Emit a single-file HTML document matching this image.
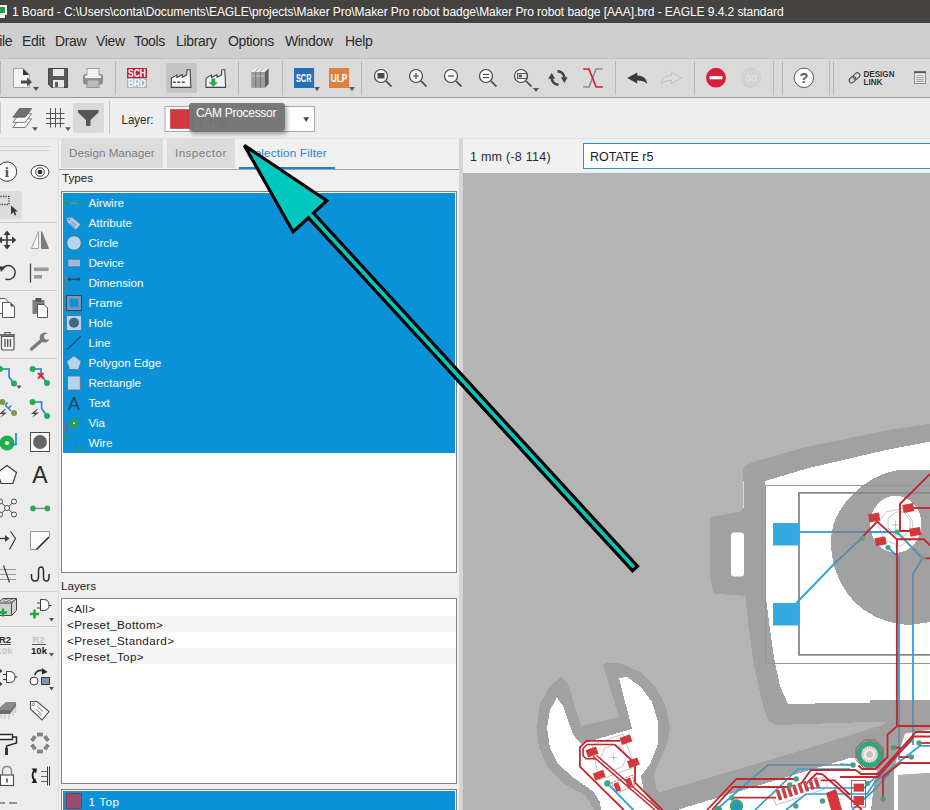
<!DOCTYPE html>
<html><head><meta charset="utf-8"><title>EAGLE</title>
<style>
html,body{margin:0;padding:0;}
body{width:930px;height:810px;overflow:hidden;position:relative;background:#f0f0f0;font-family:"Liberation Sans","DejaVu Sans",sans-serif;color:#222;}
.abs,.abs *{position:absolute;}
span{white-space:nowrap;}
#title{left:0;top:0;width:930px;height:23px;background:#454342;}
#title span{left:12px;top:5px;font-size:12px;letter-spacing:-0.07px;color:#fff;}
#menu{left:0;top:23px;width:930px;height:35px;background:#cfcfcf;}
#menu span{top:9.6px;font-size:14px;letter-spacing:-0.35px;color:#2b2b2b;}
#tb1{left:0;top:58px;width:930px;height:39px;background:#dadada;border-bottom:1px solid #979797;box-shadow:inset 0 1px 0 #c0c0c0;}
#tb2{left:0;top:98px;width:930px;height:40px;background:#eeeeee;border-bottom:1px solid #e0e0e0;}
.vs{width:1px;background:#b9b9b9;top:3px;height:34px;}
#leftbar{left:0;top:139px;width:58px;height:671px;background:#ececec;border-right:1px solid #dcdcdc;}
.hs{left:0;width:57px;height:1px;background:#cdcdcd;}
#panel{left:59px;top:139px;width:400px;height:671px;background:#f0f0f0;}
#panel span{font-size:11.7px;}
.tab{top:0;height:29px;background:#dcdcdc;}
#panel .tab span{top:7px;font-size:11.7px;color:#7d7d7d;}
.lb{background:#fff;border:1px solid #828282;box-sizing:border-box;}
.row{left:1px;width:391.5px;height:20px;background:#0a92d8;}
#panel .row span{left:25.4px;top:2.8px;color:#fff;font-size:11.7px;}
#divider{left:459px;top:139px;width:4px;height:671px;background:#d6d6d6;}
#canvas{left:463px;top:173px;width:467px;height:637px;background:#b4b4b4;}
</style></head><body>
<div id="title" class="abs"><span>1 Board - C:\Users\conta\Documents\EAGLE\projects\Maker Pro\Maker Pro robot badge\Maker Pro robot badge [AAA].brd - EAGLE 9.4.2 standard</span></div>
<div id="menu" class="abs">
<span style="left:-9px">File</span><span style="left:22px">Edit</span><span style="left:55px">Draw</span><span style="left:96px">View</span><span style="left:134px">Tools</span><span style="left:176px">Library</span><span style="left:228px">Options</span><span style="left:285px">Window</span><span style="left:345px">Help</span>
</div>
<div id="tb1" class="abs">
<div class="vs" style="left:0;"></div>
<div class="vs" style="left:115px;"></div>
<div style="left:166px;top:5px;width:31px;height:30px;background:#c4c4c4;border-radius:2px;"></div>
<div class="vs" style="left:238px;"></div>
<div class="vs" style="left:282px;"></div>
<div class="vs" style="left:361px;"></div>
<div class="vs" style="left:615px;"></div>
<div class="vs" style="left:694px;"></div>
<div class="vs" style="left:773px;"></div>
<div class="vs" style="left:782px;"></div>
<div class="vs" style="left:829px;"></div>
<div class="vs" style="left:833px;"></div>
<svg style="left:0;top:0" width="930" height="39" viewBox="0 58 930 39">
<!-- new/open -->
<path d="M13.5,68.5H23L29.5,75V87.500H13.500Z" fill="#f4f4f4" stroke="#9a9a9a" stroke-width="0.900"/>
<path d="M23,68.500V75H29.500Z" fill="#3a3a3a"/>
<path d="M21,80.500h6v-3l5,4.500l-5,4.500v-3h-6Z" fill="#4a4a4a"/>
<path d="M33,87h6l-3,4Z" fill="#555"/>
<!-- save -->
<path d="M48.500,68.500H67.500V87.500H51.500L48.500,84.500Z" fill="#5a5a5a" stroke="#444" stroke-width="1"/>
<rect x="53" y="69" width="11" height="7" fill="#e8e8e8"/>
<rect x="53" y="80" width="11" height="7.500" fill="#e8e8e8"/><rect x="55" y="82" width="3" height="5" fill="#5a5a5a"/>
<!-- print -->
<rect x="83.500" y="74.500" width="19" height="9.500" rx="1.500" fill="#8e8e8e" stroke="#858585" stroke-width="0.800"/>
<rect x="87" y="68.500" width="12" height="9.500" fill="#f2f2f2" stroke="#9a9a9a" stroke-width="0.900"/>
<rect x="85" y="75.500" width="16" height="2.500" fill="#f2f2f2"/>
<rect x="87" y="80" width="12" height="7.500" fill="#bababa" stroke="#8a8a8a" stroke-width="0.900"/>
<!-- SCH/BRD -->
<rect x="127" y="68" width="20" height="10" fill="#c8202a"/><rect x="127" y="78" width="20" height="10" fill="#b4b4b4"/>
<text x="137" y="77.300" font-size="10.500" font-weight="700" fill="#fff" text-anchor="middle" font-family="Liberation Sans, sans-serif" textLength="18" lengthAdjust="spacingAndGlyphs">SCH</text>
<text x="137" y="87.300" font-size="10.500" font-weight="700" fill="#fff" text-anchor="middle" font-family="Liberation Sans, sans-serif" textLength="18" lengthAdjust="spacingAndGlyphs">BRD</text>
<!-- CAM -->
<path d="M171.300,87.400V78.300l5.600,-3.400v2.700l5.400,-3v2.700l4.500,-2.400l0.300,-5.200h3l0.800,17.700Z" fill="#f4f4f4" stroke="#444" stroke-width="1.100" stroke-linejoin="round"/>
<path d="M172.800,82.200h3M177.300,82.200h3M181.800,82.200h3" stroke="#555" stroke-width="1.500"/>
<!-- CAM2 -->
<path d="M206,87.400V78.300l5.600,-3.400v2.700l5.400,-3v2.700l4.500,-2.400l0.300,-5.200h3l0.800,17.700Z" fill="#f4f4f4" stroke="#444" stroke-width="1.100" stroke-linejoin="round"/>
<path d="M211.300,78.500h4v3.700h2.800l-4.800,4.600l-4.800,-4.600h2.800Z" fill="#1fb04a"/>
<!-- books -->
<path d="M251.200,72l3.500,-3.600h13.800l-3.600,3.600Z" fill="#ececec"/>
<path d="M251.200,72h13.700v15.800h-13.700Z" fill="#9c9c9c"/>
<path d="M255.700,72v15.800M260.300,72v15.800" stroke="#6a6a6a" stroke-width="0.800"/>
<path d="M255.200,71.800l3.400,-3.400M259.800,71.800l3.400,-3.400" stroke="#8a8a8a" stroke-width="0.700"/>
<path d="M251.500,76h3.800M256.100,76h3.800M260.700,76h3.800" stroke="#c8c8c8" stroke-width="1"/>
<path d="M264.900,72l3.700,-3.600v15.600l-3.700,3.800Z" fill="#5c5c5c"/>
<!-- SCR -->
<rect x="294" y="68" width="20.100" height="20" fill="#2a6eb6"/>
<text x="303.700" y="82" font-size="10.500" font-weight="700" fill="#fff" text-anchor="middle" font-family="Liberation Sans, sans-serif" textLength="15.500" lengthAdjust="spacingAndGlyphs">SCR</text>
<path d="M314.200,87h5.600l-2.800,4.200Z" fill="#555"/>
<!-- ULP -->
<rect x="329" y="68" width="20.100" height="20" fill="#dc8240"/>
<text x="339" y="82" font-size="10.500" font-weight="700" fill="#fff" text-anchor="middle" font-family="Liberation Sans, sans-serif" textLength="16.500" lengthAdjust="spacingAndGlyphs">ULP</text>
<path d="M349.200,87h5.600l-2.800,4.200Z" fill="#555"/>
<!-- magnifiers -->
<g fill="none" stroke="#444" stroke-width="1.150" transform="translate(0.5,0.5)">
<circle cx="380.500" cy="75.500" r="6.500" fill="#f4f4f4"/><path d="M385.500,80.500l5.500,5.500" stroke-width="1.700"/>
<circle cx="415.500" cy="75.500" r="6.500" fill="#f4f4f4"/><path d="M420.500,80.500l5.500,5.500" stroke-width="1.700"/><path d="M412.500,75.500h6M415.500,72.500v6"/>
<circle cx="450.500" cy="75.500" r="6.500" fill="#f4f4f4"/><path d="M455.500,80.500l5.500,5.500" stroke-width="1.700"/><path d="M447.500,75.500h6"/>
<circle cx="485.500" cy="75.500" r="6.500" fill="#f4f4f4"/><path d="M490.500,80.500l5.500,5.500" stroke-width="1.700"/><path d="M482.500,74h6M482.500,77h6"/>
<circle cx="520.500" cy="75.500" r="6.500" fill="#f4f4f4"/><path d="M525.500,80.500l5.500,5.500" stroke-width="1.700"/><rect x="517" y="73" width="9.500" height="5" stroke-width="0.900" fill="#e4e4e4"/><rect x="518.300" y="74.300" width="3" height="2.400" fill="#444" stroke="none"/>
</g>
<rect x="377.500" y="73" width="7" height="5.500" fill="#4a4a4a"/>
<path d="M533,88h6l-3,4Z" fill="#555"/>
<!-- refresh -->
<path d="M558.500,84.600A6.400,6.400 0 0 1 551.700,78.300" fill="none" stroke="#444" stroke-width="2.600"/><path d="M548.200,78.700h7l-3.500,-5.600Z" fill="#444"/>
<path d="M557.500,71.400A6.400,6.400 0 0 1 564.300,77.700" fill="none" stroke="#444" stroke-width="2.600"/><path d="M560.800,77.300h7l-3.500,5.700Z" fill="#444"/>
<!-- X -->
<path d="M583.200,87h5.800l7.100,-18h6.700" fill="none" stroke="#8e8e8e" stroke-width="1.700"/>
<path d="M583.200,69h5.800l7.100,18h6.700" fill="none" stroke="#d41f2b" stroke-width="1.700"/>
<!-- undo -->
<path d="M627.200,78.100L637.200,72.500V75.500C643,75.500 646.500,78.500 647.300,83.800C645,81.200 641.500,80.500 637.200,80.500V83.400Z" fill="#3a3a3a"/>
<!-- redo -->
<path d="M681.600,78.100L671.600,72.500V75.500C665.800,75.500 662.300,78.500 661.500,83.800C663.800,81.200 667.300,80.500 671.600,80.500V83.400Z" fill="#dedede" stroke="#b4b4b4" stroke-width="0.700"/>
<!-- stop -->
<circle cx="716" cy="77.700" r="9.900" fill="#dc1e3c"/><rect x="709.500" y="76.100" width="13" height="3.200" fill="#fff"/>
<!-- go -->
<circle cx="751" cy="77.700" r="9.700" fill="#d3d3d3" stroke="#c9c9c9" stroke-width="0.700"/>
<text x="751.200" y="81.100" font-size="9.300" font-weight="700" fill="#e6e6e6" text-anchor="middle" font-family="Liberation Sans, sans-serif" textLength="11.200" lengthAdjust="spacingAndGlyphs">GO</text>
<!-- help -->
<circle cx="803.900" cy="77.800" r="9.700" fill="#fbfbfb" stroke="#4a4a4a" stroke-width="0.900"/>
<text x="803.900" y="83.300" font-size="14.500" font-weight="700" fill="#5c5c5c" text-anchor="middle" font-family="Liberation Sans, sans-serif">?</text>
<!-- link -->
<g fill="none" stroke="#555" stroke-width="1.100" transform="rotate(-42 854.500 77.800)"><rect x="848.200" y="75.300" width="7.200" height="5" rx="2.500"/><rect x="853.600" y="75.300" width="7.200" height="5" rx="2.500"/></g>
<text x="863.500" y="77" font-size="8.200" font-weight="700" fill="#333" font-family="Liberation Sans, sans-serif" textLength="31" lengthAdjust="spacingAndGlyphs">DESIGN</text>
<text x="863.500" y="84.500" font-size="8.200" font-weight="700" fill="#333" font-family="Liberation Sans, sans-serif" textLength="19" lengthAdjust="spacingAndGlyphs">LINK</text>
<!-- last -->
<rect x="914.500" y="71.500" width="11" height="12" fill="#f0f0f0" stroke="#858585" stroke-width="0.900"/><path d="M914,72.300h12" stroke="#5a5a5a" stroke-width="1.800"/><path d="M916,75.800h8M916,77.800h8M916,79.800h8M916,81.600h8" stroke="#8a8a8a" stroke-width="0.800"/>
</svg>
</div>
<div id="tb2" class="abs">
<div class="vs" style="left:0;top:4px;height:32px;background:#c8c8c8"></div>
<div style="left:73px;top:5px;width:31px;height:30px;background:#d9d9d9;border-radius:2px;"></div>
<div class="vs" style="left:109px;top:3px;height:33px;background:#c4c4c4"></div>
<svg style="left:0;top:0" width="930" height="40" viewBox="0 98 930 40">
<!-- layers -->
<path d="M12.900,127.500l6.500,-8.700h12.200l-6.400,8.700Z" fill="#f8f8f8" stroke="#5a5a5a" stroke-width="0.800"/>
<path d="M12.900,122.400l6.500,-8.700h12.200l-6.400,8.700Z" fill="#f8f8f8" stroke="#5a5a5a" stroke-width="0.800"/>
<path d="M12.900,117.200l6.500,-8.700h12.200l-6.400,8.700Z" fill="#707070" stroke="#5a5a5a" stroke-width="0.800"/>
<path d="M32.200,127.300h5.600l-2.800,3.800Z" fill="#555"/>
<!-- grid -->
<path d="M50.500,108v19.500M55.500,108v19.500M60.500,108v19.500M46,113.500h18.500M46,118.500h18.500M46,123.500h18.500" stroke="#444" stroke-width="0.900"/>
<path d="M65.200,127.300h5.600l-2.800,3.800Z" fill="#555"/>
<!-- funnel -->
<path d="M78,110h20.500v2.500l-8,7.500v5.500q-2.250,1.200 -4.500,0v-5.500l-8,-7.500Z" fill="#555"/>
<!-- layer combo -->
<text x="121.500" y="124.200" font-size="13" fill="#2a2a2a" font-family="Liberation Sans, sans-serif" textLength="32" lengthAdjust="spacingAndGlyphs">Layer:</text>
<rect x="165" y="106.500" width="149.500" height="25" fill="#fff" stroke="#a9a9a9" stroke-width="1"/>
<rect x="170.500" y="109.500" width="22" height="19" fill="#d13a40" stroke="#b83238" stroke-width="0.600"/>
<text x="197" y="124.500" font-size="12.500" fill="#333" font-family="Liberation Sans, sans-serif">1 Top</text>
<path d="M303.300,117.300h5.800l-2.900,4.600Z" fill="#444"/>
</svg>
</div>
<div id="leftbar" class="abs">
<div class="hs" style="top:7px;width:50px;background:#d2d2d2"></div>
<div class="hs" style="top:11px;width:50px;background:#d2d2d2"></div>
<div style="left:0;top:52px;width:22px;height:28px;background:#dbdbdb;border-radius:0 3px 3px 0;"></div>
<div class="hs" style="top:83px;"></div>
<div class="hs" style="top:151px;"></div>
<div class="hs" style="top:219px;"></div>
<div class="hs" style="top:452px;"></div>
<div class="hs" style="top:487px;"></div>
<svg style="left:0;top:0" width="58" height="671" viewBox="0 139 58 671" font-family="Liberation Sans, sans-serif">
<g fill="none" stroke="#3c3c3c" stroke-width="1">
<!-- info -->
<circle cx="7" cy="171.600" r="9.700" fill="#fafafa"/>
<!-- eye -->
<ellipse cx="40" cy="172" rx="9" ry="6.800" fill="#fafafa"/><circle cx="40" cy="172" r="4.300"/>
</g>
<circle cx="40" cy="172" r="2.300" fill="#2a2a2a"/>
<text x="7" y="177.300" font-size="15.500" font-weight="700" font-family="Liberation Serif, serif" fill="#555" text-anchor="middle">i</text>
<!-- select -->
<rect x="-2" y="196.500" width="11" height="8" fill="none" stroke="#3c3c3c" stroke-width="1.300" stroke-dasharray="1.300,1.200"/>
<path d="M11,205.500v9l2.300,-2.300l1.600,3.300l1.500,-0.700l-1.600,-3.200h3.200Z" fill="#3a3a3a"/>
<!-- move -->
<path d="M7,230.500l3.500,4.500h-2.700v4.200h4.200v-2.700l4.500,3.500l-4.500,3.500v-2.700h-4.200v4.200h2.700l-3.500,4.500l-3.500,-4.500h2.700v-4.200h-4.200v2.700l-4.500,-3.500l4.500,-3.500v2.700h4.200v-4.200h-2.700Z" fill="#3a3a3a"/>
<!-- mirror -->
<path d="M38.500,231.500v17h-7Z" fill="#fafafa" stroke="#8a8a8a" stroke-width="0.800"/><path d="M41.500,231.500v17h7Z" fill="#7d7d7d" stroke="#6a6a6a" stroke-width="0.800"/>
<!-- rotate -->
<path d="M2.500,268.500a7,7 0 1 1 3,10.500" fill="none" stroke="#3a3a3a" stroke-width="1.500"/><path d="M-1,266l6.500,1l-4.500,5Z" fill="#3a3a3a"/>
<!-- align -->
<path d="M30.500,263.500v19" stroke="#3a3a3a" stroke-width="1.200"/><rect x="34" y="267.500" width="14.600" height="3.600" fill="#9a9a9a"/><rect x="34" y="275" width="8" height="3.600" fill="#9a9a9a"/>
<!-- copy -->
<path d="M-3,298.500h8l4,4v11h-12Z" fill="#fafafa" stroke="#555" stroke-width="1"/><path d="M2.500,302.500h8l4,4v11h-12Z" fill="#fafafa" stroke="#555" stroke-width="1"/><path d="M10.500,302.500v4h4Z" fill="#555"/>
<!-- paste -->
<path d="M32.500,300h12v14h-12Z" fill="#7d7d7d"/><rect x="35.500" y="298" width="6" height="3.500" fill="#555"/><path d="M37.500,304.500h6.500l3.500,3.500v9.500h-10Z" fill="#fafafa" stroke="#555" stroke-width="1"/>
<!-- trash -->
<path d="M1.500,336.500h12.500v11.500q0,2 -2,2h-8.500q-2,0 -2,-2Z" fill="#fafafa" stroke="#555" stroke-width="1.200"/><path d="M0,335h15" stroke="#555" stroke-width="1.600"/><path d="M5,334.500v-2h5v2" fill="none" stroke="#555" stroke-width="1.200"/><path d="M5,339v8M7.700,339v8M10.400,339v8" stroke="#555" stroke-width="1.400"/>
<!-- wrench -->
<path d="M31.500,349l10.500,-9" stroke="#7a7a7a" stroke-width="3.400" stroke-linecap="round"/><path d="M47.500,333.500a5,5 0 1 0 1.800,5.800l-3.300,0.500l-2.300,-2.300l0.800,-3Z" fill="#7a7a7a"/>
<!-- route -->
<path d="M0,369h9v8l5,6.400" fill="none" stroke="#1a7fe0" stroke-width="1.600"/><circle cx="0" cy="369" r="3" fill="#1eb04a"/><circle cx="14" cy="383.400" r="3" fill="#1eb04a"/><path d="M16.500,385.500h5l-2.500,3.500Z" fill="#555"/>
<!-- ripup -->
<path d="M32.600,369h8.400v6l6,8" fill="none" stroke="#1a7fe0" stroke-width="1.600"/><circle cx="32.600" cy="369" r="3" fill="#1eb04a"/><circle cx="47" cy="383" r="3" fill="#1eb04a"/><path d="M38,373l5.500,5.500M43.500,373l-5.500,5.500" stroke="#f01828" stroke-width="1.800"/>
<!-- row3 left -->
<circle cx="2.400" cy="402" r="3" fill="#7f9a4a"/><circle cx="14" cy="413" r="3" fill="#7f9a4a"/><path d="M5,405l6,6M7.500,402.500l-2.500,3M11,405.500l-2.500,3" stroke="#1a7fe0" stroke-width="1.400"/><path d="M5,409l-6,5h4l-3,4l7,-5.500h-4l3,-3.500Z" fill="#4a4a4a"/>
<!-- row3 right -->
<path d="M32.600,402h9v6.500l5.400,7.500" fill="none" stroke="#1a7fe0" stroke-width="1.600"/><circle cx="32.600" cy="402" r="3" fill="#1eb04a"/><circle cx="47" cy="416" r="3" fill="#1eb04a"/><path d="M37,409l-6,5h4l-3,4l7,-5.500h-4l3,-3.500Z" fill="#4a4a4a"/>
<!-- via -->
<circle cx="7" cy="443" r="7.500" fill="#1eb04a"/><circle cx="7" cy="443" r="2" fill="#fff"/><path d="M12,444.500h4v-11.500" fill="none" stroke="#1a7fe0" stroke-width="1.600"/>
<!-- hole -->
<rect x="30.500" y="432.500" width="19" height="19" fill="#fafafa" stroke="#4a4a4a" stroke-width="1"/><circle cx="40" cy="442" r="7" fill="#666"/>
<!-- polygon -->
<path d="M7,465.500l9.500,7l-3.600,11h-11.800l-3.600,-11Z" fill="#fafafa" stroke="#3a3a3a" stroke-width="1.200"/>
<!-- A -->
<text x="40" y="483" font-size="23" fill="#2a2a2a" text-anchor="middle">A</text>
<!-- net -->
<g fill="#fafafa" stroke="#4a4a4a" stroke-width="1"><path d="M0,501.500l14,13M14,501.500l-14,13"/><circle cx="7" cy="508" r="2.500"/><circle cx="0" cy="501.500" r="2.500"/><circle cx="14" cy="501.500" r="2.500"/><circle cx="0" cy="514.500" r="2.500"/><circle cx="14" cy="514.500" r="2.500"/></g>
<!-- airwire -->
<path d="M33,508.400h14" stroke="#8a8a8a" stroke-width="1.400"/><circle cx="33" cy="508.400" r="2.800" fill="#1eb04a"/><circle cx="47.400" cy="508.400" r="2.800" fill="#1eb04a"/>
<!-- split -->
<path d="M0,538.500h7" stroke="#3a3a3a" stroke-width="1.400"/><path d="M5,535l4.500,3.500l-4.500,3.500Z" fill="#3a3a3a"/><path d="M10.500,531.500l5,7l-6,11" fill="none" stroke="#3a3a3a" stroke-width="1.200"/>
<!-- miter -->
<path d="M30.500,531.500h19v5l-13,13h-6Z" fill="#fafafa" stroke="#8a8a8a" stroke-width="0.900"/><path d="M49,537l-12.500,12.500" stroke="#2a2a2a" stroke-width="1.600"/>
<!-- meander left -->
<path d="M0,569.500h16M0,574.500h16M0,579.500h16" stroke="#9a9a9a" stroke-width="1.200"/><path d="M3.500,565.500l6,17" stroke="#3a3a3a" stroke-width="1.200"/>
<!-- wave -->
<path d="M31.500,574v3q0,4 3.500,4q3.500,0 3.500,-4v-6q0,-4 2.500,-4q2.500,0 2.500,4v6q0,4 3,4q2.500,0 2.500,-4v-3" fill="none" stroke="#2a2a2a" stroke-width="1.500"/>
<!-- add part -->
<path d="M-2,603l5,-4.500h13.500v12l-5,5h-13.500Z" fill="#d0d0d0" stroke="#4a4a4a" stroke-width="1"/><path d="M-2,603h13.500l5,-4.500M11.500,603v12.500" fill="none" stroke="#4a4a4a" stroke-width="1"/><ellipse cx="6" cy="600.700" rx="2.200" ry="1.100" fill="#fafafa" stroke="#4a4a4a" stroke-width="0.700"/><ellipse cx="11.500" cy="600.700" rx="2.200" ry="1.100" fill="#fafafa" stroke="#4a4a4a" stroke-width="0.700"/>
<path d="M-1,612.500h8M3,608.500v8" stroke="#18a838" stroke-width="2.400"/>
<!-- add gate -->
<path d="M40.500,599.500h3q5.500,0 5.500,5.500q0,5.500 -5.500,5.500h-3Z" fill="#fafafa" stroke="#3a3a3a" stroke-width="1"/><path d="M37,603h3.500M37,608h3.500M49,605.500h2.500" stroke="#3a3a3a" stroke-width="1"/><path d="M30,614h9M34.500,609.500v9" stroke="#18a838" stroke-width="2.400"/><path d="M49,618h5l-2.500,3.500Z" fill="#555"/>
<!-- R2 10k -->
<text x="5" y="642.500" font-size="9.500" font-weight="700" fill="#2a2a2a" text-anchor="middle">R2</text><path d="M-2,644.500h13" stroke="#2a2a2a" stroke-width="0.800"/><text x="4.500" y="653.500" font-size="9.500" font-weight="700" fill="#c4c4c4" text-anchor="middle">10k</text>
<text x="38.500" y="642.500" font-size="9.500" font-weight="700" fill="#c4c4c4" text-anchor="middle">R2</text><path d="M32,644.500h14" stroke="#2a2a2a" stroke-width="0.800"/><text x="39" y="653.500" font-size="9.500" font-weight="700" fill="#1a1a1a" text-anchor="middle">10k</text><path d="M49,653h5l-2.500,3.500Z" fill="#555"/>
<!-- gate -->
<path d="M6.500,671.500h3q5.500,0 5.500,5.500q0,5.500 -5.500,5.500h-3Z" fill="#fafafa" stroke="#3a3a3a" stroke-width="1"/><path d="M3,674.500h3.500M3,679.500h3.500M15,677h2.500" stroke="#3a3a3a" stroke-width="1"/><path d="M-2,671h4M0,669v4M-2,684h4M0,682v4" stroke="#2a2a2a" stroke-width="1.300"/>
<!-- replace -->
<circle cx="34" cy="681" r="4" fill="#fafafa" stroke="#3a3a3a" stroke-width="1"/><rect x="41.500" y="677.500" width="8" height="7" fill="#8096aa" stroke="#3a3a3a" stroke-width="1"/><path d="M34.500,675q3,-6.500 9.500,-4" fill="none" stroke="#2a2a2a" stroke-width="1.600"/><path d="M42,668l5.500,4l-5.500,2.500Z" fill="#2a2a2a"/><path d="M49,687h5l-2.500,3.500Z" fill="#555"/>
<!-- chip -->
<path d="M-2,709l8,-7h10l-6,8h-12Z" fill="#8a8a8a"/><path d="M-2,710h12l6,-8v4l-6,8h-12Z" fill="#6e6e6e"/><path d="M1,714v4M5,714v5M9,714v5M13,710v6M15.500,707v6" stroke="#c8c8c8" stroke-width="1.300"/>
<!-- tag -->
<path d="M30.500,701.500h6.500l12,10l-7,8.500l-11.500,-11Z" fill="#fafafa" stroke="#4a4a4a" stroke-width="1.100"/><circle cx="33.500" cy="704.500" r="1.200" fill="none" stroke="#4a4a4a" stroke-width="0.700"/><path d="M37,706.500l6,5M35.500,709l6,5M38.500,713.500l3,2.500" stroke="#6a6a6a" stroke-width="0.800"/>
<!-- roller -->
<path d="M-2,734.500h14.500v5h-14.500Z" fill="#fafafa" stroke="#2a2a2a" stroke-width="1.300"/><path d="M12.500,737h4v6l-10,3v3" fill="none" stroke="#2a2a2a" stroke-width="1.500"/><path d="M6.500,748v7" stroke="#2a2a2a" stroke-width="2.800"/>
<!-- ring -->
<g fill="#8a8a8a" stroke="#5a5a5a" stroke-width="0.600"><rect x="37.500" y="733" width="5" height="3"/><rect x="37.500" y="750" width="5" height="3"/><rect x="44" y="737" width="5" height="3" transform="rotate(55 46.500 738.500)"/><rect x="44" y="745.500" width="5" height="3" transform="rotate(-55 46.500 747)"/><rect x="31" y="737" width="5" height="3" transform="rotate(-55 33.500 738.500)"/><rect x="31" y="745.500" width="5" height="3" transform="rotate(55 33.500 747)"/></g>
<!-- lock -->
<path d="M2.500,775v-4q0,-4.500 4.500,-4.500q4.500,0 4.500,4.500v4" fill="none" stroke="#8a8a8a" stroke-width="1.400"/><rect x="0.500" y="775" width="13" height="10.500" fill="#fafafa" stroke="#4a4a4a" stroke-width="1.100"/><path d="M7,778.500v4" stroke="#4a4a4a" stroke-width="1.600"/>
<!-- optimize -->
<path d="M49.500,766.500v19M47.500,766.500v19" stroke="#3a3a3a" stroke-width="1"/><path d="M41,771.500h6M41,776.500h6M41,781.500h6" stroke="#6a6a6a" stroke-width="1.200"/><path d="M34.500,770q-4,5 0,11" fill="none" stroke="#1a1a1a" stroke-width="1.800"/><path d="M31.500,768.500h5.500l-1,5Z M31.500,783h5.500l-2,-5Z" fill="#1a1a1a"/>
<!-- dashes -->
<path d="M0,803h5M9,803h8" stroke="#7a7a7a" stroke-width="1.300"/>
</svg>
</div>
<div id="panel" class="abs">
<div class="tab" style="left:2px;width:102px;"><span style="left:8px;">Design Manager</span></div>
<div class="tab" style="left:108px;width:68px;"><span style="left:8px;letter-spacing:0.4px;">Inspector</span></div>
<span style="left:187.700px;top:7px;letter-spacing:0.18px;color:#1a86d0;">Selection Filter</span>
<div style="left:180px;top:28px;width:96px;height:3px;background:#1787d3;"></div>
<div style="left:0;top:30px;width:400px;height:1px;background:#a4a4a4;"></div>
<span style="left:3px;top:32.3px;">Types</span>
<div class="lb" style="left:2px;top:52px;width:396px;height:382px;">
<div class="row" style="top:1px;"><span>Airwire</span></div>
<div class="row" style="top:21px;"><span>Attribute</span></div>
<div class="row" style="top:41px;"><span>Circle</span></div>
<div class="row" style="top:61px;"><span>Device</span></div>
<div class="row" style="top:81px;"><span>Dimension</span></div>
<div class="row" style="top:101px;"><span>Frame</span></div>
<div class="row" style="top:121px;"><span>Hole</span></div>
<div class="row" style="top:141px;"><span>Line</span></div>
<div class="row" style="top:161px;"><span>Polygon Edge</span></div>
<div class="row" style="top:181px;"><span>Rectangle</span></div>
<div class="row" style="top:201px;"><span>Text</span></div>
<div class="row" style="top:221px;"><span>Via</span></div>
<div class="row" style="top:241px;"><span>Wire</span></div>
<!--TYPEICONS-->
<svg style="left:0;top:0" width="30" height="262" viewBox="62 192 30 262" font-family="Liberation Sans, sans-serif">
<path d="M68,203.300h11.700" stroke="#6f8ea6" stroke-width="1.300"/><circle cx="68" cy="203.300" r="2.300" fill="#1f9a6a"/><circle cx="79.700" cy="203.300" r="2.300" fill="#1f9a6a"/>
<path d="M66.800,217.200h5.500l8.500,7.300l-5,5.500l-9,-8Z" fill="#a8c8e8" stroke="#5a7a98" stroke-width="0.900"/><circle cx="69" cy="219.300" r="0.900" fill="#0a92d8"/><path d="M71.500,221.500l4.500,4M70.300,223.200l4.500,4" stroke="#5a7a98" stroke-width="0.700"/>
<circle cx="74" cy="243" r="7.300" fill="#b3d3ee" stroke="#466886" stroke-width="0.900"/>
<rect x="68.300" y="259.500" width="11.700" height="7" fill="#9dbbd9"/><path d="M70,258v2M73,258v2M76,258v2M78.500,258v2M70,266v2.300M73,266v2.300M76,266v2.300M78.500,266v2.300" stroke="#5a7896" stroke-width="1.200"/>
<path d="M66.500,275.500v15.500M81.500,275.500v15.500" stroke="#5a7a98" stroke-width="1"/><path d="M69,279.300h10" stroke="#26384a" stroke-width="1.100"/><path d="M67.500,279.300l2.700,-2v4Z M80.500,279.300l-2.700,-2v4Z" fill="#26384a"/>
<rect x="66.500" y="295.500" width="15" height="15" fill="#7a97b9" stroke="#34465a" stroke-width="1"/><rect x="69.700" y="298.700" width="8.500" height="8.500" fill="#0a92d8"/>
<rect x="66.500" y="315.500" width="15" height="15" fill="#b3d3ee" stroke="#5a7a98" stroke-width="1"/><circle cx="74" cy="322.700" r="5" fill="#456584"/>
<path d="M67,349.700l13.800,-13.400" stroke="#26384a" stroke-width="1.100"/>
<path d="M74,355.800l7.200,5.400l-2.700,8.300h-9l-2.700,-8.300Z" fill="#b3d3ee" stroke="#5a7a98" stroke-width="0.900"/>
<rect x="67.500" y="376" width="12.800" height="14" fill="#b3d3ee" stroke="#5a7a98" stroke-width="0.900"/>
<text x="74" y="409.600" font-size="18" fill="#284060" text-anchor="middle">A</text>
<path d="M81.300,415.800v6" stroke="#1a7fe0" stroke-width="1.200"/><path d="M66.700,423v8" stroke="#a04a5c" stroke-width="1.200"/><circle cx="74" cy="423.300" r="5.300" fill="#259a66"/><circle cx="74" cy="423.300" r="1" fill="#e8f4f0"/>
<path d="M67.800,437.200h6.400l1.700,2v5l3.800,4.100" fill="none" stroke="#1a7fe0" stroke-width="1.200"/><circle cx="67.800" cy="437.200" r="2.200" fill="#1f9a6a"/><circle cx="79.700" cy="448.300" r="2.200" fill="#1f9a6a"/>
</svg>
<!--/TYPEICONS-->
</div>
<span style="left:2px;top:439.5px;">Layers</span>
<div class="lb" style="left:2px;top:459px;width:396px;height:186px;">
<div style="left:1px;top:17px;width:393px;height:16px;background:#f5f5f5;"></div>
<div style="left:1px;top:49px;width:393px;height:16px;background:#f5f5f5;"></div>
<span style="left:5px;letter-spacing:0.35px;top:2.5px;">&lt;All&gt;</span>
<span style="left:5px;letter-spacing:0.35px;top:18.5px;">&lt;Preset_Bottom&gt;</span>
<span style="left:5px;letter-spacing:0.35px;top:34.5px;">&lt;Preset_Standard&gt;</span>
<span style="left:5px;letter-spacing:0.35px;top:50.5px;">&lt;Preset_Top&gt;</span>
</div>
<div class="lb" style="left:2px;top:650px;width:396px;height:30px;">
<div class="row" style="top:1px;"><div style="left:3px;top:2px;width:16px;height:16px;background:#964d6e;border:1px solid #a03050;box-sizing:border-box;"></div><span style="letter-spacing:0.55px;top:3.500px;left:25.500px;">1 Top</span></div>
</div>
</div>
<div id="divider" class="abs"></div>
<div id="topbar" class="abs" style="left:463px;top:139px;width:467px;height:34px;">
<span style="left:7px;top:11px;font-size:12.5px;letter-spacing:0.25px;color:#2a2a2a;">1 mm (-8 114)</span>
<div style="left:120px;top:4px;width:360px;height:26px;box-sizing:border-box;border:1px solid #2b8fd6;background:#fff;"><span style="left:6px;top:6px;font-size:12.5px;color:#222;">ROTATE r5</span></div>
</div>
<div id="canvas" class="abs">
<svg style="left:0;top:0" width="467" height="637" viewBox="463 173 467 637">
<polygon points="930,423.6 886,430.5 805,447.3 759.2,460.3 746.2,465 744,467 743.2,470 743.2,508 740.7,511.5 725.8,514.3 711,517 709.8,519.7 709.8,576 711.5,584.2 713.6,593.7 744.8,595.8 745.5,597.8 746.9,610 748,622 754,666 764,710 769,721 776,725 884,721.5 885.5,724 806,749 744,767.5 660,792 656,789 654,774 660,760 668,742 670,728 666,706 656,688 640,672 620,663 606,662.4 603,665 619,717 581,726 568,684 561,677 550,686 540,704 536.4,728 539,748 548,768 564,784 586,796 594,810 930,810" fill="#a1a1a1" shape-rendering="crispEdges"/>
<polygon points="930,441.6 886,450 808.9,468 765.3,481 765.5,594 769,622 774,658 780,686 788,704 870,702.5 870,700 930,700" fill="#fff" shape-rendering="crispEdges"/>
<path d="M743.5,481V508" stroke="#fff" stroke-width="0.6"/>
<rect x="731" y="532.5" width="13" height="44" rx="3" fill="#fff"/>
<polygon points="557,697.6 563,706 572.2,732.2 576,739 581,743.8 602.3,737.5 632,729 619,678 627,677 640,686 652,702 658,722 658,744 650,764 641,776 644,792 650,800 657,810 601,810 600,802 594,792 574,778 558,764 550,748 547,728 550,710" fill="#fff" shape-rendering="crispEdges"/>
<polygon points="677,810 690,806 850,758 864,757 877,770 874.6,779 871,810" fill="#fff" shape-rendering="crispEdges"/>
<polygon points="930,729.7 905,733.5 894,768 894,810 899,810 899,775 930,773" fill="#fff"/>
<polygon points="898,775 930,773 930,810 898,810" fill="#b0b0b0"/>
<path d="M930,470 L898,470 C880,473 864,482 851,496 C838,510 831,524 831,541 C831,556 834,566 836,572 C842,588 852,602 864,610 C878,620 896,625 910,625 L930,622 Z" fill="#a1a1a1" shape-rendering="crispEdges"/>
<path d="M930,485.5H765.5V663.5H930" fill="none" stroke="#959595" stroke-width="1"/>
<path d="M930,492.9H799V654.8H930" fill="none" stroke="#878787" stroke-width="1.8"/>
<ellipse cx="895.8" cy="524.3" rx="25.7" ry="28.5" fill="#fff" shape-rendering="crispEdges"/>
<rect x="773" y="523" width="26.6" height="22.5" fill="#36a9df"/>
<rect x="773" y="603" width="26.6" height="22.5" fill="#36a9df"/>
<polyline points="799.6,532 831,532" fill="none" stroke="#2f9fd8" stroke-width="1.8"/>
<polyline points="831,532 870,532" fill="none" stroke="#5c8ba8" stroke-width="1.8"/>
<polyline points="870,532 897,532 912.5,548" fill="none" stroke="#2f9fd8" stroke-width="1.8"/>
<polyline points="912.5,548 922.4,558" fill="none" stroke="#5c8ba8" stroke-width="1.8"/>
<polyline points="796.4,603 836,562" fill="none" stroke="#2f9fd8" stroke-width="1.8"/>
<polyline points="836,562 862,538" fill="none" stroke="#5c8ba8" stroke-width="1.8"/>
<polyline points="888,547.6 897,556" fill="none" stroke="#2f9fd8" stroke-width="1.8"/>
<polyline points="899,556 899,622" fill="none" stroke="#5c8ba8" stroke-width="1.7"/>
<polyline points="899,622 899,700" fill="none" stroke="#2f9fd8" stroke-width="1.8"/>
<polyline points="899,700 899,760" fill="none" stroke="#5c8ba8" stroke-width="1.7"/>
<polyline points="922.6,558 913,574 913,624" fill="none" stroke="#5c8ba8" stroke-width="1.7"/>
<polyline points="913,624 913,700" fill="none" stroke="#2f9fd8" stroke-width="1.8"/>
<polyline points="913,700 913,745" fill="none" stroke="#5c8ba8" stroke-width="1.7"/>
<path d="M886,512 L904,508 L912,520 L914,538 L900,546 L884,540 L878,524 Z M888,518l8,-6h8l6,8v10l-6,6h-8l-8,-8Z M891,525h9M895.5,520.5v9" fill="none" stroke="#8c8c8c" stroke-width="0.5"/>
<polyline points="930,474 900,504 900,531 914,531" fill="none" stroke="#c4272d" stroke-width="1.9"/>
<polyline points="910,508 930,508" fill="none" stroke="#c4272d" stroke-width="1.9"/>
<polyline points="862.2,537.2 877.2,521.6 896.9,539.3 896.9,726" fill="none" stroke="#c4272d" stroke-width="1.9"/>
<polyline points="896.9,539.3 924,539.3 930,545.4" fill="none" stroke="#c4272d" stroke-width="1.9"/>
<polyline points="925.4,558.3 930,558.3" fill="none" stroke="#c4272d" stroke-width="1.9"/>
<polyline points="897.2,726 930,726" fill="none" stroke="#c4272d" stroke-width="1.9"/>
<rect x="902.9" y="504.0" width="11" height="8" fill="#d3383d" transform="rotate(-10 908.4 508)"/>
<rect x="868.7" y="513.5" width="11" height="8" fill="#d3383d" transform="rotate(-10 874.2 517.5)"/>
<rect x="909.7" y="527.8" width="11" height="8" fill="#d3383d" transform="rotate(-10 915.2 531.8)"/>
<rect x="875.1" y="537.3" width="11" height="8" fill="#d3383d" transform="rotate(-10 880.6 541.3)"/>
<circle cx="862.4" cy="538" r="2.6" fill="#6f9a90"/>
<circle cx="897" cy="532" r="2.6" fill="#3aa880"/>
<circle cx="888" cy="547.6" r="2.6" fill="#3aa880"/>
<circle cx="922.6" cy="558" r="2.6" fill="#6f9a90"/>
<path d="M600.6,757.4l3.800,-9.100l9.100,-3.800l9.100,3.800l3.800,9.100l-3.800,9.100l-9.100,3.800l-9.100,-3.800Z M609.500,757.400h8M613.500,753.400v8 M592,745l31,-11l12,33l-36,13Z" fill="none" stroke="#8c8c8c" stroke-width="0.500"/>
<polyline points="620.5,740.8 586.7,740.8 579.9,747.2 579.9,766.6 623.8,810" fill="none" stroke="#c4272d" stroke-width="1.8"/>
<polyline points="614.6,744.5 587.2,744.5 583.1,748.3 583.1,755.8 586.1,758.8 596,758.8" fill="none" stroke="#c4272d" stroke-width="1.6"/>
<polyline points="614.6,744.5 635,763.3 635,782.7 662.5,810" fill="none" stroke="#c4272d" stroke-width="1.8"/>
<polyline points="596.3,755.2 659.5,810" fill="none" stroke="#c4272d" stroke-width="1.5"/>
<polyline points="593,756.4 655,810" fill="none" stroke="#c4272d" stroke-width="1.5"/>
<rect x="620.4" y="735.95" width="11" height="7.5" fill="#d3383d" transform="rotate(-20 625.9 739.7)"/>
<rect x="586.5" y="748.25" width="11" height="7.5" fill="#d3383d" transform="rotate(-20 592 752)"/>
<rect x="627.9" y="759.05" width="11" height="7.5" fill="#d3383d" transform="rotate(-20 633.4 762.8)"/>
<rect x="593.7" y="771.45" width="11" height="7.5" fill="#d3383d" transform="rotate(-20 599.2 775.2)"/>
<rect x="614.8" y="782.5" width="5" height="9" fill="#d3383d" transform="rotate(-20 617.3 787)"/>
<rect x="626.35" y="778.2" width="5.5" height="9" fill="#d3383d" transform="rotate(-20 629.1 782.7)"/>
<path d="M611.400,782.700l21,-7.500l2.100,10.700l-18.300,7.500Z" fill="none" stroke="#c4272d" stroke-width="0.700" stroke-dasharray="2,1"/>
<circle cx="607.4" cy="783.4" r="3.2" fill="#3aa880"/>
<polyline points="609.8,785.9 633.4,810" fill="none" stroke="#2f9fd8" stroke-width="1.8"/>
<path d="M851,752a18,18 0 0 1 18,-16l16,-3" stroke="#9a9a9a" stroke-width="0.6" fill="none"/>
<circle cx="869.6" cy="754.4" r="10.8" fill="#f4f0f0" stroke="#2ea87a" stroke-width="5.2"/>
<circle cx="869.6" cy="754.4" r="6.8" fill="none" stroke="#d4a8ac" stroke-width="2.4" stroke-dasharray="1,1"/><circle cx="869.6" cy="754.4" r="3.4" fill="#c8c0c0"/>
<path d="M864,740h11l8,8v12l-8,8h-11l-8,-8v-12Z" fill="none" stroke="#c4272d" stroke-width="0.7"/>
<polyline points="716,810 755,776" fill="none" stroke="#2f9fd8" stroke-width="1.7"/>
<polyline points="755,776 768,765 850,765" fill="none" stroke="#5c8ba8" stroke-width="1.7"/>
<polyline points="755,810 798,769 850,769" fill="none" stroke="#2f9fd8" stroke-width="1.7"/>
<polyline points="840,764 853,765" fill="none" stroke="#2f9fd8" stroke-width="1.7"/>
<polyline points="912.8,739.6 868.4,784" fill="none" stroke="#2f9fd8" stroke-width="1.7"/>
<polyline points="930,745.8 920,745.8 899,762" fill="none" stroke="#2f9fd8" stroke-width="1.7"/>
<polyline points="899,762 875,782" fill="none" stroke="#5c8ba8" stroke-width="1.7"/>
<polyline points="875,782 867,794 806,794 786,810" fill="none" stroke="#2f9fd8" stroke-width="1.7"/>
<polyline points="806,788 864.7,787.8 867.4,783.5" fill="none" stroke="#2f9fd8" stroke-width="1.7"/>
<polyline points="852,810 872,792" fill="none" stroke="#2f9fd8" stroke-width="1.7"/>
<polyline points="872,792 889,774" fill="none" stroke="#5c8ba8" stroke-width="1.7"/>
<polyline points="707,810 736.5,779 796,779" fill="none" stroke="#c4272d" stroke-width="1.8"/>
<polyline points="712,810 733,787 790,787" fill="none" stroke="#c4272d" stroke-width="1.8"/>
<polyline points="731,797.6 776,797.6" fill="none" stroke="#c4272d" stroke-width="1.8"/>
<polyline points="800,785 811,770 856,770" fill="none" stroke="#c4272d" stroke-width="1.8"/>
<polyline points="806,784 816.5,773.5 822.5,774.4 850,798.5 862,810" fill="none" stroke="#c4272d" stroke-width="1.8"/>
<polyline points="820.7,780.4 834.5,780.4 850,795" fill="none" stroke="#c4272d" stroke-width="1.8"/>
<polyline points="897.2,726 887.5,734.7 887.5,757 875.8,769 862,769 858.5,765.5" fill="none" stroke="#c4272d" stroke-width="1.8"/>
<polyline points="930,732 916,732 878,774 861,774 856,770" fill="none" stroke="#c4272d" stroke-width="1.8"/>
<polyline points="930,736.5 914,736.5 878,777 840,777" fill="none" stroke="#c4272d" stroke-width="1.8"/>
<polyline points="930,743 919,743" fill="none" stroke="#c4272d" stroke-width="1.8"/>
<polyline points="930,763 900.5,763 883,777 883,799" fill="none" stroke="#c4272d" stroke-width="1.8"/>
<polyline points="911.4,757 899,757" fill="none" stroke="#c4272d" stroke-width="1.8"/>
<polyline points="893.3,747.7 900.5,747.7" fill="none" stroke="#c4272d" stroke-width="1.8"/>
<rect x="777.3" y="789.75" width="3.4" height="10.5" fill="#d3383d" transform="rotate(-18 779.0 795.0)"/>
<rect x="782.6999999999999" y="788.0" width="3.4" height="10.5" fill="#d3383d" transform="rotate(-18 784.4 793.25)"/>
<rect x="788.0999999999999" y="786.25" width="3.4" height="10.5" fill="#d3383d" transform="rotate(-18 789.8 791.5)"/>
<rect x="793.5" y="784.5" width="3.4" height="10.5" fill="#d3383d" transform="rotate(-18 795.2 789.75)"/>
<rect x="798.9" y="782.75" width="3.4" height="10.5" fill="#d3383d" transform="rotate(-18 800.6 788.0)"/>
<rect x="804.3" y="781.0" width="3.4" height="10.5" fill="#d3383d" transform="rotate(-18 806.0 786.25)"/>
<rect x="809.6999999999999" y="779.25" width="3.4" height="10.5" fill="#d3383d" transform="rotate(-18 811.4 784.5)"/>
<rect x="815.0999999999999" y="777.5" width="3.4" height="10.5" fill="#d3383d" transform="rotate(-18 816.8 782.75)"/>
<path d="M772,794l52,-17l4,11l-52,17Z" fill="none" stroke="#9a9a9a" stroke-width="0.6"/>
<path d="M826,793l10,-4l6,21h-11Z" fill="#d3383d"/>
<rect x="851.6" y="780.6" width="14" height="26.5" fill="none" stroke="#c4272d" stroke-width="0.8"/><rect x="853.6" y="783.6" width="10.4" height="8" fill="#d3383d"/><rect x="853.6" y="796" width="10.4" height="9" fill="#d3383d"/>
<circle cx="732" cy="798" r="2.7" fill="#4f9c84"/>
<circle cx="789.8" cy="785" r="2.7" fill="#4f9c84"/>
<circle cx="796.3" cy="779" r="2.7" fill="#4f9c84"/>
<circle cx="795.8" cy="806" r="2.7" fill="#4f9c84"/>
<circle cx="822.5" cy="801" r="2.7" fill="#4f9c84"/>
<circle cx="893.3" cy="747.7" r="2.7" fill="#4f9c84"/>
<circle cx="853" cy="765" r="2.7" fill="#4f9c84"/>
<circle cx="867.4" cy="783.5" r="2.7" fill="#4f9c84"/>
<circle cx="919" cy="743" r="2.7" fill="#4f9c84"/>
<circle cx="911.4" cy="757" r="2.7" fill="#4f9c84"/>
<circle cx="883" cy="799" r="2.7" fill="#4f9c84"/>
<circle cx="736.5" cy="806" r="5" fill="#2a8fd8" stroke="#2ea87a" stroke-width="3.5"/>
<circle cx="718" cy="810" r="4" fill="#2ea87a"/>
</svg>
</div>
<div class="abs" style="left:189px;top:103px;width:96px;height:27.500px;background:rgba(114,114,114,0.96);border-radius:3px;box-shadow:2px 3px 4px rgba(0,0,0,0.35);"><span style="left:7px;top:3px;font-size:12px;color:#fff;letter-spacing:-0.3px;">CAM Processor</span></div>
<div class="abs" style="left:0;top:5px;width:6.5px;height:12.5px;background:#f4f4f4;"><div style="left:0;top:1.5px;width:5px;height:6.5px;background:#2a9a48;"></div><div style="left:4.5px;top:9.5px;width:2px;height:3px;background:#454342;"></div></div>
<svg class="abs" style="left:0;top:0;pointer-events:none" width="930" height="810" viewBox="0 0 930 810"><polygon points="244.3,145.4 326.8,200.7 313.5,213.2 637.5,566.2 632.5,570.8 308.5,217.8 293.1,231.8" fill="#00c8be" stroke="#000" stroke-width="3.2" stroke-linejoin="miter"/></svg>
</body></html>
